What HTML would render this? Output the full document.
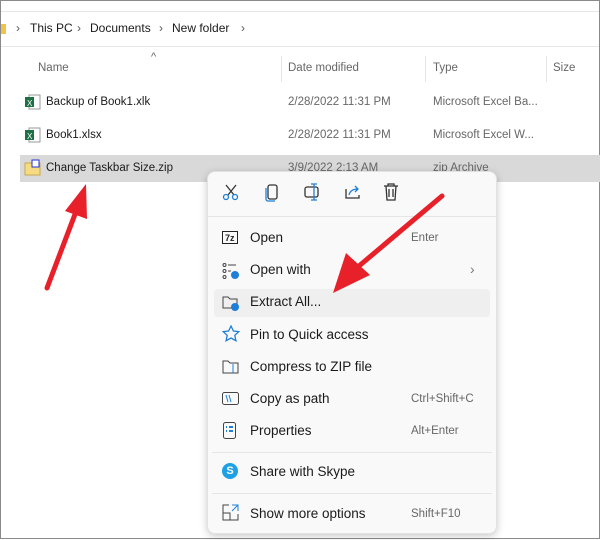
<!DOCTYPE html>
<html><head><style>
*{margin:0;padding:0;box-sizing:border-box}
body{width:600px;height:539px;overflow:hidden;background:#fff;font-family:"Liberation Sans",sans-serif;position:relative;border:1px solid #8a8a8a}
.t{position:absolute;font-size:11.5px;color:#1a1a1a;white-space:nowrap}
.g{color:#666}
.hl{position:absolute;left:0;right:0;height:1px;background:#e6e6e6}
.menu{position:absolute;left:206px;top:170px;width:290px;height:363px;background:#f9f9f9;border-radius:8px;box-shadow:0 2px 8px rgba(0,0,0,.22);border:1px solid #e2e2e2}
.mi{position:absolute;left:42px;font-size:13.5px;color:#1a1a1a}
.sc{position:absolute;left:203px;font-size:11.5px;color:#666}
.ic{position:absolute;left:14px}
.bc{font-size:12px}
</style></head><body>
<div class="hl" style="top:10px"></div>
<div class="hl" style="top:45px"></div>
<div style="position:absolute;left:0;top:23px;width:5px;height:10px;background:#f2c34a"></div>
<div class="t bc" style="left:15px;top:20px;color:#555">›</div>
<div class="t bc" style="left:29px;top:20px">This PC</div>
<div class="t bc" style="left:76px;top:20px;color:#555">›</div>
<div class="t bc" style="left:89px;top:20px">Documents</div>
<div class="t bc" style="left:158px;top:20px;color:#555">›</div>
<div class="t bc" style="left:171px;top:20px">New folder</div>
<div class="t bc" style="left:240px;top:20px;color:#555">›</div>
<div class="t g" style="left:150px;top:50px;font-size:11px">^</div>
<div class="t g" style="left:37px;top:61px">Name</div>
<div style="position:absolute;left:280px;top:55px;width:1px;height:26px;background:#e5e5e5"></div>
<div class="t g" style="left:287px;top:61px">Date modified</div>
<div style="position:absolute;left:424px;top:55px;width:1px;height:26px;background:#e5e5e5"></div>
<div class="t g" style="left:432px;top:61px">Type</div>
<div style="position:absolute;left:545px;top:55px;width:1px;height:26px;background:#e5e5e5"></div>
<div class="t g" style="left:552px;top:61px">Size</div>

<svg style="position:absolute;left:23px;top:93px" width="17" height="17"><rect x="5" y="1" width="11" height="14" fill="#fff" stroke="#999"/><rect x="1" y="3" width="9" height="10" fill="#1d7044"/><text x="3" y="12" font-size="8" fill="#fff" font-family="Liberation Sans">X</text></svg>
<div class="t" style="left:45px;top:95px">Backup of Book1.xlk</div>
<div class="t g" style="left:287px;top:95px">2/28/2022 11:31 PM</div>
<div class="t g" style="left:432px;top:95px">Microsoft Excel Ba...</div>
<svg style="position:absolute;left:23px;top:126px" width="17" height="17"><rect x="5" y="1" width="11" height="14" fill="#fff" stroke="#999"/><rect x="1" y="3" width="9" height="10" fill="#1d7044"/><text x="3" y="12" font-size="8" fill="#fff" font-family="Liberation Sans">X</text></svg>
<div class="t" style="left:45px;top:128px">Book1.xlsx</div>
<div class="t g" style="left:287px;top:128px">2/28/2022 11:31 PM</div>
<div class="t g" style="left:432px;top:128px">Microsoft Excel W...</div>
<div style="position:absolute;left:19px;top:154px;width:581px;height:27px;background:#d9d9d9"></div>
<svg style="position:absolute;left:23px;top:158px" width="18" height="18"><rect x="1" y="4" width="15" height="12" fill="#f5dc83" stroke="#c9a84a"/><rect x="8" y="1" width="7" height="7" fill="#fff" stroke="#2233cc"/></svg>
<div class="t" style="left:45px;top:161px">Change Taskbar Size.zip</div>
<div class="t g" style="left:287px;top:161px">3/9/2022 2:13 AM</div>
<div class="t g" style="left:432px;top:161px">zip Archive</div>

<div class="menu">
<svg style="position:absolute;left:0;top:0" width="290" height="40" fill="none" stroke-width="1.3">
<g stroke="#333"><path d="M18 13l8 10M28 13l-8 10"/></g><circle cx="18" cy="25" r="2.5" stroke="#1e7fd8"/><circle cx="27" cy="25" r="2.5" stroke="#1e7fd8"/>
<rect x="60" y="13" width="9" height="14" rx="2" stroke="#333"/><path d="M58 16v11a2 2 0 0 0 2 2h7" stroke="#1e7fd8"/>
<rect x="97" y="15" width="13" height="10" rx="2" stroke="#333"/><path d="M106 12v16M103 12h6M103 28h6" stroke="#1e7fd8"/>
<path d="M138 17v9h13v-3" stroke="#333"/><path d="M141 23c1-4 4-6 9-6M147 14l3 3-3 3" stroke="#1e7fd8"/>
<path d="M176 14h14M180 14v-2h6v2M178 14l1 14h8l1-14M181 17v8M185 17v8" stroke="#333"/>
</svg>
<div style="position:absolute;left:0;right:0;top:44px;height:1px;background:#e5e5e5"></div>
<svg class="ic" style="top:59px" width="16" height="14"><rect x="0.5" y="0.5" width="15" height="12" fill="none" stroke="#222"/><text x="3" y="10" font-size="9" font-weight="bold" font-family="Liberation Sans" fill="#222">7z</text></svg>
<div class="mi" style="top:58px">Open</div><div class="sc" style="top:60px">Enter</div>
<svg class="ic" style="top:90px" width="18" height="18" fill="none" stroke="#444"><circle cx="2.5" cy="3" r="1.5"/><circle cx="2.5" cy="9" r="1.5"/><circle cx="2.5" cy="15" r="1.5"/><path d="M6 3h8M6 9h3"/><circle cx="13" cy="13" r="4" fill="#1e7fd8" stroke="none"/></svg>
<div class="mi" style="top:90px">Open with</div><div style="position:absolute;left:262px;top:89px;color:#777;font-size:14px">›</div>
<div style="position:absolute;left:6px;right:6px;top:117px;height:28px;background:#efefef;border-radius:4px"></div>
<svg class="ic" style="top:122px" width="18" height="18" fill="none" stroke="#444"><path d="M1 3h5l2 2h7v9H1z"/><circle cx="13" cy="13" r="4" fill="#1e7fd8" stroke="none"/></svg>
<div class="mi" style="top:122px">Extract All...</div>
<svg class="ic" style="top:153px" width="18" height="18"><path d="M9 1l2.4 5 5.4.6-4 3.7 1.1 5.4L9 13l-4.9 2.7 1.1-5.4-4-3.7L6.6 6z" fill="none" stroke="#1e7fd8" stroke-width="1.3"/></svg>
<div class="mi" style="top:155px">Pin to Quick access</div>
<svg class="ic" style="top:186px" width="18" height="18" fill="none" stroke="#444"><path d="M1 3h5l2 2h8v10H1z"/><path d="M11 6v9" stroke="#1e7fd8"/></svg>
<div class="mi" style="top:187px">Compress to ZIP file</div>
<svg class="ic" style="top:220px" width="18" height="14" fill="none" stroke="#444"><rect x="0.5" y="0.5" width="16" height="12" rx="2"/><path d="M4 3l2 7M7 3l2 7" stroke="#1e7fd8"/></svg>
<div class="mi" style="top:219px">Copy as path</div><div class="sc" style="top:221px">Ctrl+Shift+C</div>
<svg class="ic" style="top:250px" width="16" height="18" fill="none" stroke="#444"><rect x="1.5" y="0.5" width="12" height="16" rx="2"/><path d="M4 5h1M4 9h1M7 5h4M7 9h4" stroke="#1e7fd8" stroke-width="2"/></svg>
<div class="mi" style="top:251px">Properties</div><div class="sc" style="top:253px">Alt+Enter</div>
<div style="position:absolute;left:4px;right:4px;top:280px;height:1px;background:#e5e5e5"></div>
<div class="ic" style="top:291px;width:16px;height:16px;border-radius:50%;background:#1ea0e6;color:#fff;font-size:11px;font-weight:bold;text-align:center;line-height:16px">S</div>
<div class="mi" style="top:292px">Share with Skype</div>
<div style="position:absolute;left:4px;right:4px;top:321px;height:1px;background:#e5e5e5"></div>
<svg class="ic" style="top:332px" width="18" height="18" fill="none" stroke="#444"><path d="M7 1H1v15h15v-6M1 9h7v7"/><path d="M10 1h6v6M16 1l-6 6" stroke="#1e7fd8"/></svg>
<div class="mi" style="top:334px">Show more options</div><div class="sc" style="top:336px">Shift+F10</div>
</div>

<svg style="position:absolute;left:0;top:0" width="600" height="539">
<path d="M46 287L76 208" stroke="#e8202a" stroke-width="5" stroke-linecap="round"/>
<path d="M85 183L64 210L86 218Z" fill="#e8202a"/>
<path d="M441 195L358 265" stroke="#e8202a" stroke-width="5" stroke-linecap="round"/>
<path d="M332 292L345 252L369 274Z" fill="#e8202a"/>
</svg>
</body></html>
